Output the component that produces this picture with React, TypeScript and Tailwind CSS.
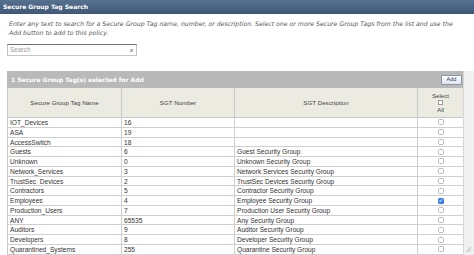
import React from "react";

const rows: [string, string, string, boolean][] = [
  ["IOT_Devices", "16", "", false],
  ["ASA", "19", "", false],
  ["AccessSwitch", "18", "", false],
  ["Guests", "6", "Guest Security Group", false],
  ["Unknown", "0", "Unknown Security Group", false],
  ["Network_Services", "3", "Network Services Security Group", false],
  ["TrustSec_Devices", "2", "TrustSec Devices Security Group", false],
  ["Contractors", "5", "Contractor Security Group", false],
  ["Employees", "4", "Employee Security Group", true],
  ["Production_Users", "7", "Production User Security Group", false],
  ["ANY", "65535", "Any Security Group", false],
  ["Auditors", "9", "Auditor Security Group", false],
  ["Developers", "8", "Developer Security Group", false],
  ["Quarantined_Systems", "255", "Quarantine Security Group", false],
];

function Box({ checked }: { checked: boolean }) {
  if (checked) {
    return (
      <span className="inline-flex w-[6px] h-[6px] rounded-[1.5px] bg-[#3b7de0] items-center justify-center">
        <svg width="5" height="5" viewBox="0 0 10 10">
          <path d="M2 5.2 L4.2 7.4 L8 2.6" stroke="white" strokeWidth="1.8" fill="none" />
        </svg>
      </span>
    );
  }
  return <span className="inline-block w-[6px] h-[6px] rounded-[1.5px] border border-[#b8b8b8] bg-white" />;
}

export default function App() {
  return (
    <div className="w-[474px] h-[255px] overflow-hidden bg-white relative" style={{ fontFamily: "'Liberation Sans', Arial, sans-serif" }}>
      <div className="h-[14px] bg-gradient-to-b from-[#56708f] to-[#3f5876] text-white font-bold text-[6px] leading-[14px] pl-[3px]" style={{ fontFamily: "'DejaVu Sans', Verdana, sans-serif" }}>
        Secure Group Tag Search
      </div>
      <div className="pl-[9px] pt-[5px] italic text-[#5a5a5a] text-[6.2px] leading-[9px]" style={{ fontFamily: "'DejaVu Sans', Verdana, sans-serif" }}>
        Enter any text to search for a Secure Group Tag name, number, or description. Select one or more Secure Group Tags from the list and use the
        <br />
        Add button to add to this policy.
      </div>
      <div className="ml-[7px] mt-[7px] w-[130px] h-[12px] border border-[#c4c4c4] border-t-[#6f6f6f] flex items-center justify-between px-[2px] text-[6.5px] text-[#999]">
        <span>Search</span>
        <span className="text-[#333] text-[6px] pr-[1px]">x</span>
      </div>
      <div className="mt-[15px] flex">
        <div className="w-[456px] ml-[7px]">
          <div className="h-[17px] bg-[#b9b9b9] flex items-center justify-between pl-[4px] pr-[1px]">
            <span className="text-white font-bold text-[6px]" style={{ fontFamily: "'DejaVu Sans', Verdana, sans-serif" }}>
              1 Secure Group Tag(s) selected for Add
            </span>
            <span className="w-[21px] h-[10px] bg-gradient-to-b from-white to-[#dfe4ee] border border-[#8a96ad] rounded-[1px] flex items-center justify-center text-[5.5px] text-[#2a3f6b]">
              Add
            </span>
          </div>
          <div className="grid grid-cols-[114px_113px_183px_46px] border-l border-[#c8c8c8] text-[6.6px] text-[#333]">
            <div className="h-[30px] bg-[#ebebe2] border-r border-b border-[#c8c8c8] flex items-center justify-center text-[6.2px] text-[#444]">Secure Group Tag Name</div>
            <div className="h-[30px] bg-[#ebebe2] border-r border-b border-[#c8c8c8] flex items-center justify-center text-[6.2px] text-[#444]">SGT Number</div>
            <div className="h-[30px] bg-[#ebebe2] border-r border-b border-[#c8c8c8] flex items-center justify-center text-[6.2px] text-[#444]">SGT Description</div>
            <div className="h-[30px] bg-[#ebebe2] border-r border-b border-[#c8c8c8] flex flex-col items-center justify-center text-[6.2px] text-[#444] leading-[7px]">
              <span>Select</span>
              <span className="inline-block w-[5px] h-[5px] border border-[#999] bg-white my-[1px]" />
              <span>All</span>
            </div>
            {rows.map(([n, num, d, c]) => (
              <React.Fragment key={n}>
                <div className="h-[9.77px] border-r border-b border-[#cfcfcf] pl-[2px] leading-[9px] whitespace-nowrap overflow-hidden">{n}</div>
                <div className="h-[9.77px] border-r border-b border-[#cfcfcf] pl-[2px] leading-[9px]">{num}</div>
                <div className="h-[9.77px] border-r border-b border-[#cfcfcf] pl-[2px] leading-[9px] whitespace-nowrap">{d}</div>
                <div className="h-[9.77px] border-r border-b border-[#cfcfcf] flex items-center justify-center"><Box checked={c} /></div>
              </React.Fragment>
            ))}
          </div>
        </div>
        <div className="flex-1 bg-[#f0f0f0] border-l border-[#d8d8d8]" />
      </div>
      <svg className="absolute right-[2px] bottom-[2px]" width="7" height="7" viewBox="0 0 7 7">
        <path d="M6 1 L1 6 M6 3.5 L3.5 6" stroke="#aaa" strokeWidth="0.8" />
      </svg>
    </div>
  );
}
